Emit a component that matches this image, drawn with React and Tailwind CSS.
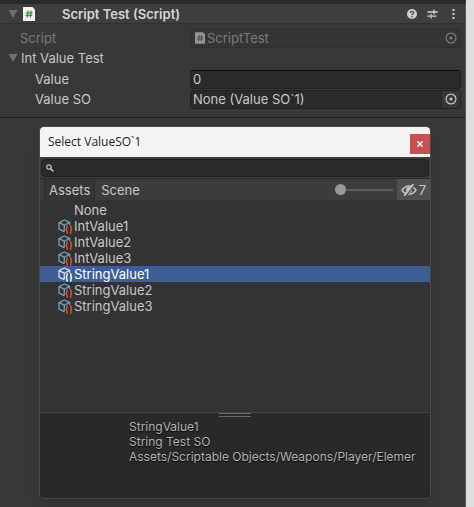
import { useState } from 'react'

const assets = ['None', 'IntValue1', 'IntValue2', 'IntValue3', 'StringValue1', 'StringValue2', 'StringValue3']

function Arrow() {
  return (
    <svg width="10" height="8" viewBox="0 0 10 8" fill="#6f6f6f"><path d="M0.5 0h9L5 8z" /></svg>
  )
}

function ScriptIcon({ className, page, hash }) {
  return (
    <svg className={className} viewBox="0 0 12 14">
      <path d="M0 0H9.5L12 2.5V14H0Z" fill={page} />
      <path d="M5.2 3.6L4.2 10.6M8.2 3.6L7.2 10.6M2.8 5.8H9.6M2.6 8.4H9.3" stroke={hash} strokeWidth="1.2" fill="none" />
    </svg>
  )
}

function TargetIcon({ color }) {
  return (
    <svg width="12" height="12" viewBox="0 0 12 12">
      <circle cx="6" cy="6" r="4.9" fill="none" stroke={color} strokeWidth="1.2" />
      <circle cx="6" cy="6" r="1.6" fill={color} />
    </svg>
  )
}

function AssetIcon({ selected }) {
  const cube = selected ? '#d5deeb' : '#6fa3b8'
  const brace = selected ? '#ffffff' : '#e0532f'
  return (
    <svg width="15" height="15" viewBox="0 0 15 15" fill="none">
      <path d="M6.2 12.6L1 10.2V3.7L6.4 1L11.6 3.4V6M1 3.7L6.3 6.2L11.6 3.4M6.3 6.2V12.6" stroke={cube} strokeWidth="1.3" strokeLinejoin="round" />
      <path d="M9.8 6.8C8.6 6.8 8.9 8 8.9 9S8.6 10.3 7.8 10.5C8.6 10.7 8.9 11.2 8.9 12.1S8.6 14.2 9.8 14.2M12 6.8C13.2 6.8 12.9 8 12.9 9S13.2 10.3 14 10.5C13.2 10.7 12.9 11.2 12.9 12.1S13.2 14.2 12 14.2" stroke={brace} strokeWidth="1.4" />
    </svg>
  )
}

function HiddenIcon() {
  return (
    <svg width="16" height="12" viewBox="0 0 16 12" fill="none" stroke="#c4c4c4">
      <path d="M1 6.2C3 3.2 5.3 2 8 2S13 3.2 15 6.2C13 9.2 10.7 10.2 8 10.2S3 9.2 1 6.2Z" strokeWidth="1.5" />
      <circle cx="8" cy="6" r="2.9" fill="#c4c4c4" stroke="none" />
      <path d="M14 0L5 12" stroke="#505050" strokeWidth="1.6" />
      <path d="M12.4 0L3.2 11.8" strokeWidth="1.8" />
    </svg>
  )
}

function Header() {
  return (
    <header className="flex h-5 items-center border-b border-[#303030] bg-[#3e3e3e] pl-2 pr-1.5">
      <button aria-label="Fold component"><Arrow /></button>
      <ScriptIcon className="ml-1 h-3.5 w-3.5" page="#f0f3ee" hash="#3f8a45" />
      <h1 className="ml-[26px] flex-1 text-[13px] font-semibold text-[#d6d6d6]">Script Test (Script)</h1>
      <div className="flex items-center gap-2.5">
        <button aria-label="Help">
          <svg width="10" height="10" viewBox="0 0 10 10">
            <circle cx="5" cy="5" r="5" fill="#cfcfcf" />
            <path d="M3.4 3.9C3.4 1.7 6.7 1.8 6.7 3.7C6.7 4.8 5 4.8 5 6M5 7V8.2" stroke="#3e3e3e" strokeWidth="1.2" fill="none" />
          </svg>
        </button>
        <button aria-label="Presets">
          <svg width="11" height="10" viewBox="0 0 11 10" stroke="#cfcfcf" strokeWidth="1.3" fill="none">
            <path d="M0.5 3H7M7 0.6V5.2M7 3H10.8M0.3 7.2H3M4 5V9.6M4 7.2H9.5" />
          </svg>
        </button>
        <button aria-label="More" className="px-1">
          <svg width="3" height="10" viewBox="0 0 3 10" fill="#cfcfcf">
            <path d="M0.5 0h2v2h-2zM0.5 4h2v2h-2zM0.5 8h2v2h-2z" />
          </svg>
        </button>
      </div>
    </header>
  )
}

function Inspector() {
  return (
    <section className="border-b border-[#1f1f1f] pb-2 pt-1 pr-1">
      <div className="flex h-5 items-center text-[#7a7a7a]">
        <label htmlFor="script" className="w-[190px] shrink-0 pl-5">Script</label>
        <div className="flex h-[19px] min-w-0 flex-1 items-center rounded-[3px] border border-[#303030] bg-[#353535] pl-1">
          <ScriptIcon className="h-3 w-2.5 shrink-0" page="#8f9494" hash="#4a4f4f" />
          <input id="script" disabled defaultValue="ScriptTest" className="ml-0.5 min-w-0 flex-1 bg-transparent" />
          <button disabled aria-label="Pick script" className="px-[3px]"><TargetIcon color="#7c7c7c" /></button>
        </div>
      </div>
      <button className="mb-px flex h-5 items-center gap-[3px] pl-2"><Arrow />Int Value Test</button>
      <div className="flex h-5 items-center">
        <label htmlFor="value" className="w-[190px] shrink-0 pl-[35px]">Value</label>
        <input id="value" defaultValue="0" className="h-[19px] min-w-0 flex-1 rounded-[3px] border border-[#212121] border-t-[#0d0d0d] bg-[#2a2a2a] px-0.5" />
      </div>
      <div className="flex h-5 items-center">
        <label htmlFor="valueSo" className="w-[190px] shrink-0 pl-[35px]">Value SO</label>
        <div className="flex h-[19px] min-w-0 flex-1 items-center rounded-[3px] border border-[#212121] bg-[#2a2a2a] pl-0.5">
          <input id="valueSo" readOnly defaultValue="None (Value SO`1)" className="min-w-0 flex-1 bg-transparent" />
          <button aria-label="Pick value" className="flex h-full items-center bg-[#373737] px-[3px]"><TargetIcon color="#c4c4c4" /></button>
        </div>
      </div>
    </section>
  )
}

function ObjectPicker() {
  const [selected, setSelected] = useState('StringValue1')
  return (
    <section className="mb-2 ml-[39px] mr-[34px] mt-2 flex flex-1 flex-col overflow-hidden rounded-[5px] border border-[#4a4a4a] bg-[#333333] shadow-lg">
      <div className="flex h-[30px] items-center justify-between bg-[#f4f4f4] pl-2">
        <h2 className="font-['Open_Sans',sans-serif] text-xs text-[#1c1c1c]">Select ValueSO`1</h2>
        <button aria-label="Close" className="mt-1 flex h-5 w-5 items-center justify-center bg-[#c84f52]">
          <svg width="6" height="6" viewBox="0 0 6 6" stroke="#fff" strokeWidth="1.5"><path d="M0.5 0.5L5.5 5.5M5.5 0.5L0.5 5.5" /></svg>
        </button>
      </div>
      <div className="bg-[#3c3c3c] px-px pb-px pt-0.5">
        <label className="flex h-[18px] items-center rounded-[4px] border border-[#222222] bg-[#2a2a2a] pl-1">
          <svg width="8" height="8" viewBox="0 0 8 8" fill="none" stroke="#c4c4c4">
            <circle cx="3" cy="3" r="2.2" strokeWidth="1.2" />
            <path d="M4.6 4.6L7.5 7.5" strokeWidth="1.5" />
          </svg>
          <input type="search" aria-label="Search" className="ml-1 min-w-0 flex-1 bg-transparent" />
        </label>
      </div>
      <div className="flex h-[22px] items-stretch border-t border-[#2c2c2c] bg-[#3c3c3c] pl-1">
        <button className="border-x border-[#2c2c2c] bg-[#353535] px-1">Assets</button>
        <button className="px-1.5">Scene</button>
        <input
          type="range"
          min="0"
          max="100"
          defaultValue="0"
          aria-label="Thumbnail size"
          className="my-auto ml-auto mr-1 h-[11px] w-[58px] appearance-none bg-[linear-gradient(#5e5e5e,#5e5e5e)] bg-[length:100%_2px] bg-center bg-no-repeat [&::-webkit-slider-thumb]:h-[11px] [&::-webkit-slider-thumb]:w-[11px] [&::-webkit-slider-thumb]:appearance-none [&::-webkit-slider-thumb]:rounded-full [&::-webkit-slider-thumb]:bg-[#999999]"
        />
        <button aria-label="Hidden packages: 7" className="flex items-center gap-0.5 bg-[#505050] px-1"><HiddenIcon />7</button>
      </div>
      <ul className="flex-1 pb-4 pt-0.5">
        {assets.map(name => (
          <li key={name}>
            <button
              onClick={() => setSelected(name)}
              className={`flex h-4 w-full items-center gap-px pl-[18px] ${name === selected ? 'bg-[#3e5f96] text-white' : ''}`}
            >
              <span className="h-[15px] w-[15px]">{name !== 'None' && <AssetIcon selected={name === selected} />}</span>
              {name}
            </button>
          </li>
        ))}
      </ul>
      <footer className="flex h-[86px] flex-col border-t border-[#454545] bg-[#292929]">
        <div className="mx-auto h-1 w-8 border-y border-[#6a6a6a]" />
        <div className="ml-[89px] mr-1.5 mt-0.5 overflow-hidden whitespace-nowrap text-xs leading-[15px] text-[#b4b4b4] [text-shadow:0_1px_1px_#000]">
          <p>{selected}</p>
          <p>String Test SO</p>
          <p>Assets/Scriptable Objects/Weapons/Player/Elemer</p>
        </div>
      </footer>
    </section>
  )
}

export default function App() {
  return (
    <div className="flex min-h-screen bg-[#dedede] font-['Inter',sans-serif] text-[13px] leading-4 text-[#c8c8c8]">
      <main className="mr-2 flex min-w-0 flex-1 flex-col border-r border-t-4 border-r-[#555555] border-t-[#292929] bg-[#383838]">
        <Header />
        <Inspector />
        <ObjectPicker />
      </main>
    </div>
  )
}
